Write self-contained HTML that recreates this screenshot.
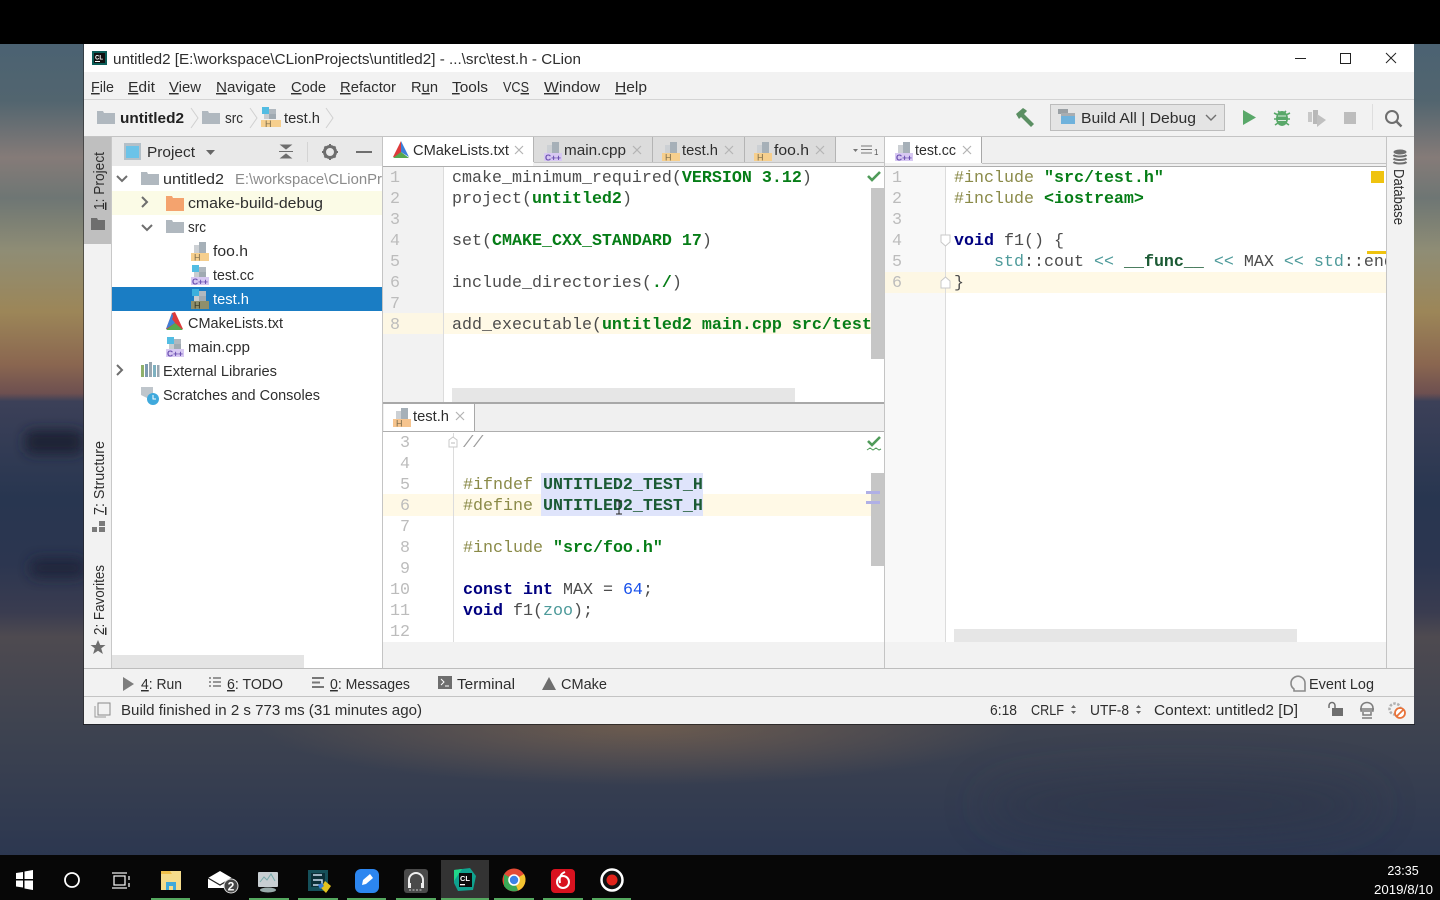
<!DOCTYPE html>
<html><head><meta charset="utf-8"><title>CLion</title>
<style>
html,body{margin:0;padding:0;width:1440px;height:900px;overflow:hidden;background:#000}
svg{display:block}
.u{font-family:"Liberation Sans",sans-serif;font-size:14.5px;fill:#2e2e2e}
.m{font-family:"Liberation Mono",monospace;font-size:16.67px;fill:#4c4c4c;white-space:pre}
.n{font-family:"Liberation Mono",monospace;font-size:16.67px;fill:#bcbcbc}
.g{fill:#067d17;font-weight:bold}
.k{fill:#000080;font-weight:bold}
.p{fill:#8a8a48}
.s{fill:#1b5a34;font-weight:bold}
.x{stroke:#b4b4b4;stroke-width:1.2;fill:none}
.hl{font-family:"Liberation Sans",sans-serif;font-size:9px;fill:#7a6a4a}
.cl{font-family:"Liberation Sans",sans-serif;font-size:8.5px;font-weight:bold;fill:#6a4fb0}
</style></head><body>
<svg width="1440" height="900" viewBox="0 0 1440 900" xmlns="http://www.w3.org/2000/svg">
<defs>
<linearGradient id="sky" x1="0" y1="44" x2="0" y2="856" gradientUnits="userSpaceOnUse">
<stop offset="0" stop-color="#4b6272"/><stop offset=".07" stop-color="#52656f"/><stop offset=".14" stop-color="#857b78"/><stop offset=".19" stop-color="#6e7674"/><stop offset=".255" stop-color="#8f8d75"/><stop offset=".33" stop-color="#9c8658"/><stop offset=".395" stop-color="#8a6650"/><stop offset=".43" stop-color="#6e5050"/><stop offset=".44" stop-color="#3c4058"/><stop offset=".56" stop-color="#283650"/><stop offset=".64" stop-color="#2c3650"/><stop offset=".70" stop-color="#3a3c50"/><stop offset=".73" stop-color="#4e4a50"/><stop offset=".84" stop-color="#3e4350"/><stop offset="1" stop-color="#2c3750"/>
</linearGradient>
<radialGradient id="glow" cx="640" cy="725" r="380" gradientUnits="userSpaceOnUse" gradientTransform="matrix(1 0 0 .16 0 609)">
<stop offset="0" stop-color="#75604f" stop-opacity=".85"/><stop offset="1" stop-color="#75604f" stop-opacity="0"/>
</radialGradient>
<filter id="bl" x="-50%" y="-100%" width="200%" height="300%"><feGaussianBlur stdDeviation="6"/></filter>
<filter id="bl2" x="-50%" y="-100%" width="200%" height="300%"><feGaussianBlur stdDeviation="22"/></filter>
<clipPath id="c1"><rect x="383" y="167" width="488" height="235"/></clipPath>
<clipPath id="c2"><rect x="383" y="433" width="488" height="209"/></clipPath>
<clipPath id="c3"><rect x="885" y="167" width="501" height="475"/></clipPath>
<g id="bh"><rect x="1" y="0" width="7" height="7" fill="#40b6e0" opacity=".9"/><rect x="8" y="2" width="7" height="5" fill="#b0b8bf"/><rect x="8" y="7" width="7" height="5" fill="#a0aab2"/><rect x="3" y="7" width="5" height="5" fill="#c8ccd0"/></g>
<g id="gh"><rect x="3" y="4" width="5" height="8" fill="#ccd0d4"/><rect x="8" y="1" width="7" height="11" fill="#a6b0b8"/></g>
<path id="fold" d="M0 1h6l1 2h11v11H0z" fill="#b0b8bf"/>
</defs>

<!-- desktop -->
<rect x="0" y="0" width="1440" height="44" fill="#000"/>
<rect x="0" y="44" width="1440" height="812" fill="url(#sky)"/>
<rect x="0" y="724" width="1440" height="132" fill="url(#glow)"/>
<ellipse cx="1180" cy="805" rx="200" ry="28" fill="#2a3044" opacity=".45" filter="url(#bl2)"/>
<rect x="25" y="430" width="58" height="24" rx="8" fill="#1f2236" filter="url(#bl)"/>
<rect x="30" y="558" width="55" height="20" rx="8" fill="#1a2238" opacity=".8" filter="url(#bl)"/>
<rect x="83" y="44" width="1" height="681" fill="#222" opacity=".55"/>
<rect x="83" y="724" width="1332" height="1" fill="#111" opacity=".6"/>

<!-- window -->
<rect x="84" y="44" width="1330" height="680" fill="#f2f2f2"/>
<rect x="84" y="44" width="1330" height="28" fill="#fff"/>
<rect x="92" y="51" width="15" height="14" fill="#0b5d58"/><rect x="94" y="53" width="11" height="10" fill="#111"/>
<text x="95" y="59.5" font-family="Liberation Sans" font-size="6" font-weight="bold" fill="#fff">CL</text>
<rect x="95" y="61" width="5" height="1" fill="#fff"/>
<text class="u" x="113" y="64" textLength="468" lengthAdjust="spacingAndGlyphs">untitled2 [E:\workspace\CLionProjects\untitled2] - ...\src\test.h - CLion</text>
<path d="M1295 58.5h11" stroke="#222" stroke-width="1"/>
<rect x="1340.500" y="53.500" width="10" height="10" fill="none" stroke="#222"/>
<path d="M1386 53l10 10M1396 53l-10 10" stroke="#222" stroke-width="1"/>

<!-- menu -->
<g>
<text class="u" x="91" y="92" textLength="23" lengthAdjust="spacingAndGlyphs"><tspan text-decoration="underline">F</tspan>ile</text>
<text class="u" x="128" y="92" textLength="27" lengthAdjust="spacingAndGlyphs"><tspan text-decoration="underline">E</tspan>dit</text>
<text class="u" x="169" y="92" textLength="32" lengthAdjust="spacingAndGlyphs"><tspan text-decoration="underline">V</tspan>iew</text>
<text class="u" x="216" y="92" textLength="60" lengthAdjust="spacingAndGlyphs"><tspan text-decoration="underline">N</tspan>avigate</text>
<text class="u" x="291" y="92" textLength="35" lengthAdjust="spacingAndGlyphs"><tspan text-decoration="underline">C</tspan>ode</text>
<text class="u" x="340" y="92" textLength="56" lengthAdjust="spacingAndGlyphs"><tspan text-decoration="underline">R</tspan>efactor</text>
<text class="u" x="411" y="92" textLength="27" lengthAdjust="spacingAndGlyphs">R<tspan text-decoration="underline">u</tspan>n</text>
<text class="u" x="452" y="92" textLength="36" lengthAdjust="spacingAndGlyphs"><tspan text-decoration="underline">T</tspan>ools</text>
<text class="u" x="503" y="92" textLength="26" lengthAdjust="spacingAndGlyphs">VC<tspan text-decoration="underline">S</tspan></text>
<text class="u" x="544" y="92" textLength="56" lengthAdjust="spacingAndGlyphs"><tspan text-decoration="underline">W</tspan>indow</text>
<text class="u" x="615" y="92" textLength="32" lengthAdjust="spacingAndGlyphs"><tspan text-decoration="underline">H</tspan>elp</text>
</g>
<rect x="84" y="99" width="1330" height="1" fill="#d4d4d4"/>

<!-- nav bar -->
<use href="#fold" transform="translate(97,110)"/>
<text class="u" x="120" y="123" textLength="64" lengthAdjust="spacingAndGlyphs" style="font-weight:bold;fill:#222">untitled2</text>
<path d="M191 108l7 10-7 10" fill="none" stroke="#d0d0d0"/>
<use href="#fold" transform="translate(202,110)"/>
<text class="u" x="225" y="123" textLength="18" lengthAdjust="spacingAndGlyphs">src</text>
<path d="M250 108l7 10-7 10" fill="none" stroke="#d0d0d0"/>
<g transform="translate(261,107)"><use href="#bh"/><rect y="13" width="20" height="7" fill="#f6cf8e"/><text class="hl" x="4" y="20">H</text></g>
<text class="u" x="284" y="123" textLength="36" lengthAdjust="spacingAndGlyphs">test.h</text>
<path d="M326 108l7 10-7 10" fill="none" stroke="#d0d0d0"/>
<!-- toolbar right -->
<path d="M1016 114l7-6 3 2 1 1-3 3 10 10-3 3-10-10-2 2z" fill="#5b8f63"/>
<rect x="1050.500" y="104.500" width="174" height="26" fill="#e4e4e4" stroke="#bcbcbc"/>
<rect x="1058" y="109" width="10" height="5" fill="#9aa0a4"/><rect x="1061" y="113" width="14" height="11" fill="#6fb2dc"/><rect x="1061" y="113" width="14" height="3" fill="#a8adb1"/>
<text class="u" x="1081" y="123" textLength="115" lengthAdjust="spacingAndGlyphs">Build All | Debug</text>
<path d="M1206 115l5 5 5-5" fill="none" stroke="#707070" stroke-width="1.4"/>
<path d="M1243 110l13 7.500-13 7.500z" fill="#59a869"/>
<ellipse cx="1282" cy="118.500" rx="6" ry="7.500" fill="#59a869"/><path d="M1274 113l4 2M1290 113l-4 2M1274 119h3M1290 119h-3M1275 125l3-2M1289 125l-3-2M1278 111l2 2M1286 111l-2 2" stroke="#59a869" stroke-width="1.6"/><path d="M1278 116h8M1278 120.500h8" stroke="#dcebdf" stroke-width="1"/>
<rect x="1308" y="112" width="4" height="10" fill="#c8c8c8"/><rect x="1313" y="110" width="5" height="14" fill="#b8b8b8"/><path d="M1317 114l9 6-9 7z" fill="#c0c0c0"/>
<rect x="1344" y="112" width="12" height="12" fill="#bdbdbd"/>
<rect x="1372" y="104" width="1" height="26" fill="#dedede"/>
<circle cx="1392" cy="117" r="6" fill="none" stroke="#6e6e6e" stroke-width="2"/><path d="M1396.500 121.500l5 5" stroke="#6e6e6e" stroke-width="2.4"/>
<rect x="84" y="136" width="1330" height="1" fill="#c4c4c4"/>

<!-- left stripe -->
<rect x="84" y="137" width="28" height="531" fill="#f2f2f2"/>
<rect x="84" y="137" width="27" height="107" fill="#bfbfbf"/>
<rect x="111" y="137" width="1" height="531" fill="#c8c8c8"/>
<g class="u">
<text class="u" transform="translate(104,210) rotate(-90)" textLength="58" lengthAdjust="spacingAndGlyphs"><tspan text-decoration="underline">1</tspan>: Project</text>
<text class="u" transform="translate(104,515) rotate(-90)" textLength="74" lengthAdjust="spacingAndGlyphs"><tspan text-decoration="underline">7</tspan>: Structure</text>
<text class="u" transform="translate(104,635) rotate(-90)" textLength="70" lengthAdjust="spacingAndGlyphs"><tspan text-decoration="underline">2</tspan>: Favorites</text>
</g>
<path d="M91 218h6l1 2h7v10H91z" fill="#6e6e6e"/>
<rect x="92" y="527" width="5" height="5" fill="#7a7a7a"/><rect x="99" y="527" width="6" height="5" fill="#7a7a7a"/><rect x="99" y="521" width="6" height="5" fill="#7a7a7a"/>
<path d="M98 640l2.200 5h5.300l-4.300 3.400 1.700 5.600-4.900-3.200-4.900 3.200 1.700-5.600-4.300-3.400h5.300z" fill="#6e6e6e"/>

<!-- project panel -->
<rect x="112" y="137" width="270" height="531" fill="#fff"/>
<rect x="112" y="137" width="270" height="29" fill="#e9e9e9"/>
<rect x="124" y="143" width="17" height="17" fill="#b4c0c8"/><rect x="126" y="146" width="13" height="12" fill="#6cc3e8"/>
<text class="u" x="147" y="157" textLength="48" lengthAdjust="spacingAndGlyphs">Project</text>
<path d="M206 150h9l-4.500 5z" fill="#666"/>
<path d="M279 151.500h14M281 145h10l-5 4zM281 158h10l-5-4z" fill="#6e6e6e" stroke="#6e6e6e" stroke-width="1"/>
<rect x="307" y="142" width="1" height="20" fill="#d4d4d4"/>
<circle cx="330" cy="152" r="5.500" fill="none" stroke="#6e6e6e" stroke-width="3"/><path d="M330 144v3M330 157v3M322 152h3M335 152h3M324.500 146.500l2 2M333.500 155.500l2 2M335.500 146.500l-2 2M326.500 155.500l-2 2" stroke="#6e6e6e" stroke-width="2"/>
<rect x="356" y="151" width="16" height="2" fill="#6e6e6e"/>
<rect x="112" y="191" width="270" height="24" fill="#fbfbe6"/>
<rect x="112" y="287" width="270" height="24" fill="#1a7dc4"/>
<!-- tree -->
<path d="M117 176l5 5 5-5M142 197l5 5-5 5M142 225l5 5 5-5M117 365l5 5-5 5" fill="none" stroke="#6e6e6e" stroke-width="2"/>
<use href="#fold" transform="translate(141,171)"/>
<text class="u" x="163" y="184" textLength="61" lengthAdjust="spacingAndGlyphs">untitled2</text>
<text class="u" x="235" y="184" textLength="147" lengthAdjust="spacingAndGlyphs" style="fill:#8c8c8c">E:\workspace\CLionPr</text>
<path d="M166 196h6l1 2h11v13h-18z" fill="#f4a36e"/>
<text class="u" x="188" y="208" textLength="135" lengthAdjust="spacingAndGlyphs">cmake-build-debug</text>
<use href="#fold" transform="translate(166,219)"/>
<text class="u" x="188" y="232" textLength="18" lengthAdjust="spacingAndGlyphs">src</text>
<g transform="translate(191,241)"><use href="#gh"/><rect y="12" width="18" height="8" fill="#f6cf8e"/><text class="hl" x="3" y="19.500">H</text></g>
<text class="u" x="213" y="256" textLength="35" lengthAdjust="spacingAndGlyphs">foo.h</text>
<g transform="translate(191,265)"><use href="#bh"/><rect y="12" width="18" height="8" fill="#d7c8f2"/><text class="cl" x="1" y="19.500" textLength="16" lengthAdjust="spacingAndGlyphs">C++</text></g>
<text class="u" x="213" y="280" textLength="41" lengthAdjust="spacingAndGlyphs">test.cc</text>
<g transform="translate(191,289)"><use href="#bh"/><rect y="12" width="18" height="8" fill="#8f8f6c"/><text class="hl" x="3" y="19.500" style="fill:#33321f">H</text></g>
<text class="u" x="213" y="304" textLength="36" lengthAdjust="spacingAndGlyphs" style="fill:#fff">test.h</text>
<path d="M166 329l6-16 3-1 8 17z" fill="#dd3b3b"/><path d="M172 313l-6 16 9-6z" fill="#3d7fd8"/><path d="M166 330l9-7 8 7z" fill="#55a84f"/><path d="M172 319l3-6 4 9-3 2z" fill="#dd3b3b"/>
<text class="u" x="188" y="328" textLength="95" lengthAdjust="spacingAndGlyphs">CMakeLists.txt</text>
<g transform="translate(166,337)"><use href="#bh"/><rect y="12" width="18" height="8" fill="#d7c8f2"/><text class="cl" x="1" y="19.500" textLength="16" lengthAdjust="spacingAndGlyphs">C++</text></g>
<text class="u" x="188" y="352" textLength="62" lengthAdjust="spacingAndGlyphs">main.cpp</text>
<g><rect x="141" y="365" width="3" height="12" fill="#8fb06a"/><rect x="145" y="364" width="3" height="13" fill="#7d9ab0"/><rect x="149" y="362" width="3" height="15" fill="#9aa7b0"/><rect x="153" y="365" width="3" height="12" fill="#7db0c0"/><rect x="157" y="365" width="2.500" height="12" fill="#9aa7b0"/></g>
<text class="u" x="163" y="376" textLength="114" lengthAdjust="spacingAndGlyphs">External Libraries</text>
<path d="M141 387h12v8l-6 3-6-3z" fill="#bfc6cc"/><circle cx="153" cy="399" r="6" fill="#3fa9dc"/><path d="M153 395v4h3" stroke="#fff" fill="none"/>
<text class="u" x="163" y="400" textLength="157" lengthAdjust="spacingAndGlyphs">Scratches and Consoles</text>
<rect x="112" y="655" width="192" height="13" fill="#e4e4e4"/>
<rect x="382" y="137" width="1" height="531" fill="#c4c4c4"/>

<!-- upper editor -->
<rect x="383" y="137" width="501" height="29" fill="#f0f0f0"/>
<rect x="383" y="137" width="150" height="29" fill="#fff"/>
<rect x="534" y="137" width="118" height="25" fill="#dcdcdc"/>
<rect x="653" y="137" width="91" height="25" fill="#dcdcdc"/>
<rect x="745" y="137" width="90" height="25" fill="#dcdcdc"/>
<path d="M533.500 137v25M652.500 137v25M744.500 137v25M835.500 137v25" stroke="#b4b4b4"/>
<rect x="534" y="162" width="350" height="1" fill="#c4c4c4"/>
<rect x="383" y="166" width="501" height="1" fill="#aeaeae"/>
<path d="M401 141l-8 16h8z" fill="#dd3b3b"/><path d="M401 141l8 16-8-5z" fill="#3d7fd8"/><path d="M393 158l8-6 8 6z" fill="#55a84f"/>
<text class="u" x="413" y="155" textLength="96" lengthAdjust="spacingAndGlyphs">CMakeLists.txt</text>
<path class="x" d="M515 146l8 8M523 146l-8 8"/>
<g transform="translate(544,141)"><use href="#gh"/><rect y="12" width="18" height="8" fill="#d7c8f2"/><text class="cl" x="1" y="19.500" textLength="16" lengthAdjust="spacingAndGlyphs">C++</text></g>
<text class="u" x="564" y="155" textLength="62" lengthAdjust="spacingAndGlyphs">main.cpp</text>
<path class="x" d="M633 146l8 8M641 146l-8 8"/>
<g transform="translate(662,141)"><use href="#gh"/><rect y="12" width="18" height="8" fill="#f6cf8e"/><text class="hl" x="3" y="19.500">H</text></g>
<text class="u" x="682" y="155" textLength="36" lengthAdjust="spacingAndGlyphs">test.h</text>
<path class="x" d="M725 146l8 8M733 146l-8 8"/>
<g transform="translate(754,141)"><use href="#gh"/><rect y="12" width="18" height="8" fill="#f6cf8e"/><text class="hl" x="3" y="19.500">H</text></g>
<text class="u" x="774" y="155" textLength="35" lengthAdjust="spacingAndGlyphs">foo.h</text>
<path class="x" d="M816 146l8 8M824 146l-8 8"/>
<path d="M853 149h5l-2.500 3z" fill="#777"/><path d="M861 146h11M861 149.500h11M861 153h11" stroke="#777"/><text x="874" y="155" font-family="Liberation Sans" font-size="8" fill="#555">1</text>

<rect x="383" y="167" width="501" height="235" fill="#fff"/>
<rect x="383" y="167" width="60" height="235" fill="#f2f2f2"/>
<rect x="443" y="167" width="1" height="235" fill="#dcdcdc"/>
<rect x="383" y="313" width="60" height="21" fill="#fdf7e4"/>
<rect x="444" y="313" width="428" height="21" fill="#fff9e6"/>
<g clip-path="url(#c1)">
<text class="n" x="390" y="182">1</text><text class="n" x="390" y="203">2</text><text class="n" x="390" y="224">3</text><text class="n" x="390" y="245">4</text><text class="n" x="390" y="266">5</text><text class="n" x="390" y="287">6</text><text class="n" x="390" y="308">7</text><text class="n" x="390" y="329">8</text>
<text class="m" x="452" y="182">cmake_minimum_required(<tspan class="g">VERSION 3.12</tspan>)</text>
<text class="m" x="452" y="203">project(<tspan class="g">untitled2</tspan>)</text>
<text class="m" x="452" y="245">set(<tspan class="g">CMAKE_CXX_STANDARD 17</tspan>)</text>
<text class="m" x="452" y="287">include_directories(<tspan class="g">./</tspan>)</text>
<text class="m" x="452" y="329">add_executable(<tspan class="g">untitled2 main.cpp src/test.cc</tspan>)</text>
</g>
<rect x="871" y="188" width="13" height="171" fill="#c6c6c6"/>
<rect x="452" y="388" width="343" height="14" fill="#e6e6e6"/>
<path d="M868 176l4 4 8-8" fill="none" stroke="#4f9b59" stroke-width="2.600"/>

<rect x="383" y="402" width="501" height="2" fill="#a8a8a8"/>
<!-- lower editor -->
<rect x="383" y="404" width="501" height="28" fill="#f0f0f0"/>
<rect x="384" y="404" width="90" height="27" fill="#fff"/>
<path d="M474.500 404v27" stroke="#a8a8a8"/>
<rect x="383" y="431" width="501" height="1" fill="#aeaeae"/>
<g transform="translate(393,407)"><use href="#gh"/><rect y="12" width="18" height="8" fill="#f6c48e"/><text class="hl" x="3" y="19.500">H</text></g>
<text class="u" x="413" y="421" textLength="36" lengthAdjust="spacingAndGlyphs">test.h</text>
<path class="x" d="M456 412l8 8M464 412l-8 8"/>
<rect x="383" y="432" width="501" height="210" fill="#fff"/>
<rect x="383" y="494" width="489" height="22" fill="#fff9e6"/>
<rect x="453" y="433" width="1" height="209" fill="#dcdcdc"/>
<rect x="541" y="473" width="162" height="43" fill="#dfe4fb"/>
<g clip-path="url(#c2)">
<text class="n" x="400" y="447">3</text><text class="n" x="400" y="468">4</text><text class="n" x="400" y="489">5</text><text class="n" x="400" y="510">6</text><text class="n" x="400" y="531">7</text><text class="n" x="400" y="552">8</text><text class="n" x="400" y="573">9</text><text class="n" x="390" y="594">10</text><text class="n" x="390" y="615">11</text><text class="n" x="390" y="636">12</text>
<text class="m" x="463" y="447" style="fill:#9c9c9c;font-style:italic">//</text>
<text class="m" x="463" y="489"><tspan class="p">#ifndef</tspan> <tspan class="s">UNTITLED2_TEST_H</tspan></text>
<text class="m" x="463" y="510"><tspan class="p">#define</tspan> <tspan class="s">UNTITLED2_TEST_H</tspan></text>
<text class="m" x="463" y="552"><tspan class="p">#include</tspan> <tspan class="g">"src/foo.h"</tspan></text>
<text class="m" x="463" y="594"><tspan class="k">const int</tspan> MAX = <tspan fill="#1750eb">64</tspan>;</text>
<text class="m" x="463" y="615"><tspan class="k">void</tspan> f1(<tspan fill="#4d9a9a">zoo</tspan>);</text>
</g>
<path d="M449 447v-7l4-3 4 3v7z" fill="#fff" stroke="#c8c8c8"/><path d="M451 443h4" stroke="#bbb"/>
<path d="M616 501h3v13h-3M622 501h-3v13h3" fill="none" stroke="#222"/>
<rect x="871" y="473" width="13" height="93" fill="#c6c6c6"/>
<rect x="866" y="491" width="14" height="3" fill="#b0b0e6"/><rect x="866" y="501" width="14" height="3" fill="#b0b0e6"/>
<path d="M868 441l4 4 8-8" fill="none" stroke="#4f9b59" stroke-width="2.600"/><path d="M867 450l3-2 3 2 3-2 3 2 2-1" fill="none" stroke="#4f9b59"/>
<rect x="383" y="642" width="501" height="26" fill="#f2f2f2"/>
<rect x="884" y="137" width="1" height="531" fill="#c4c4c4"/>

<!-- right editor -->
<rect x="885" y="137" width="501" height="29" fill="#f0f0f0"/>
<rect x="885" y="137" width="96" height="26" fill="#fff"/>
<path d="M981.500 137v26" stroke="#a8a8a8"/>
<rect x="982" y="163" width="404" height="1" fill="#c4c4c4"/>
<rect x="885" y="166" width="501" height="1" fill="#aeaeae"/>
<g transform="translate(895,141)"><use href="#gh"/><rect y="12" width="18" height="8" fill="#d7c8f2"/><text class="cl" x="1" y="19.500" textLength="16" lengthAdjust="spacingAndGlyphs">C++</text></g>
<text class="u" x="915" y="155" textLength="41" lengthAdjust="spacingAndGlyphs">test.cc</text>
<path class="x" d="M963 146l8 8M971 146l-8 8"/>
<rect x="885" y="167" width="501" height="475" fill="#fff"/>
<rect x="885" y="167" width="60" height="475" fill="#f8f8f8"/>
<rect x="945" y="167" width="1" height="475" fill="#dcdcdc"/>
<rect x="885" y="272" width="60" height="21" fill="#fdf7e4"/>
<rect x="946" y="272" width="440" height="21" fill="#fff9e6"/>
<g clip-path="url(#c3)">
<text class="n" x="892" y="182">1</text><text class="n" x="892" y="203">2</text><text class="n" x="892" y="224">3</text><text class="n" x="892" y="245">4</text><text class="n" x="892" y="266">5</text><text class="n" x="892" y="287">6</text>
<text class="m" x="954" y="182"><tspan class="p">#include</tspan> <tspan class="g">"src/test.h"</tspan></text>
<text class="m" x="954" y="203"><tspan class="p">#include</tspan> <tspan class="g">&lt;iostream&gt;</tspan></text>
<text class="m" x="954" y="245"><tspan class="k">void</tspan> f1() {</text>
<text class="m" x="954" y="266">    <tspan fill="#4d9a9a">std</tspan>::cout <tspan fill="#4d9a9a">&lt;&lt;</tspan> <tspan class="s">__func__</tspan> <tspan fill="#4d9a9a">&lt;&lt;</tspan> MAX <tspan fill="#4d9a9a">&lt;&lt;</tspan> <tspan fill="#4d9a9a">std</tspan>::endl;</text>
<text class="m" x="954" y="287">}</text>
</g>
<path d="M941 235h9v7l-4.500 4-4.500-4z" fill="#fff" stroke="#c8c8c8"/><path d="M941 288v-7l4.500-4 4.500 4v7z" fill="#fff" stroke="#c8c8c8"/>
<rect x="1371" y="171" width="13" height="12" fill="#efc30f"/>
<rect x="1367" y="251" width="19" height="3" fill="#efc30f"/>
<rect x="954" y="629" width="343" height="13" fill="#e6e6e6"/>
<rect x="885" y="642" width="501" height="26" fill="#f2f2f2"/>
<rect x="1386" y="137" width="1" height="531" fill="#c4c4c4"/>
<!-- right stripe -->
<rect x="1387" y="137" width="27" height="531" fill="#f2f2f2"/>
<ellipse cx="1400" cy="152" rx="6.500" ry="2.500" fill="#6e6e6e"/><path d="M1393.500 155c2 2 11 2 13 0M1393.500 158.500c2 2 11 2 13 0M1393.500 162c2 2 11 2 13 0" fill="none" stroke="#6e6e6e" stroke-width="2"/>
<text class="u" transform="translate(1394,169) rotate(90)" textLength="56" lengthAdjust="spacingAndGlyphs">Database</text>

<!-- bottom tool bar -->
<rect x="84" y="668" width="1330" height="1" fill="#bdbdbd"/>
<rect x="84" y="669" width="1330" height="28" fill="#f2f2f2"/>
<rect x="84" y="696" width="1330" height="1" fill="#c4c4c4"/>
<path d="M123 677l11 7-11 7z" fill="#7d7d7d"/>
<text class="u" x="141" y="689" textLength="41" lengthAdjust="spacingAndGlyphs"><tspan text-decoration="underline">4</tspan>: Run</text>
<path d="M209 678h2M213 678h8M209 682h2M213 682h8M209 686h2M213 686h8" stroke="#777" stroke-width="1.500"/>
<text class="u" x="227" y="689" textLength="56" lengthAdjust="spacingAndGlyphs"><tspan text-decoration="underline">6</tspan>: TODO</text>
<path d="M312 678h12M312 682.500h8M312 687h12" stroke="#777" stroke-width="2"/>
<text class="u" x="330" y="689" textLength="80" lengthAdjust="spacingAndGlyphs"><tspan text-decoration="underline">0</tspan>: Messages</text>
<rect x="438" y="676" width="14" height="13" fill="#6e6e6e"/><path d="M441 679l3 3-3 3M445 686h4" fill="none" stroke="#fff"/>
<text class="u" x="457" y="689" textLength="58" lengthAdjust="spacingAndGlyphs">Terminal</text>
<path d="M549 677l7 13h-14z" fill="#6e6e6e"/>
<text class="u" x="561" y="689" textLength="46" lengthAdjust="spacingAndGlyphs">CMake</text>
<path d="M1294 691h11v-8a7 7 0 1 0-11 6z" fill="none" stroke="#8a8a8a" stroke-width="1.600"/>
<text class="u" x="1309" y="689" textLength="65" lengthAdjust="spacingAndGlyphs">Event Log</text>

<!-- status -->
<rect x="84" y="697" width="1330" height="27" fill="#f2f2f2"/>
<rect x="98" y="703" width="12" height="12" fill="none" stroke="#8a8a8a"/><path d="M95 706v11h11" fill="none" stroke="#9a9a9a"/>
<text class="u" x="121" y="715" textLength="301" lengthAdjust="spacingAndGlyphs">Build finished in 2 s 773 ms (31 minutes ago)</text>
<text class="u" x="990" y="715" textLength="27" lengthAdjust="spacingAndGlyphs">6:18</text>
<text class="u" x="1031" y="715" textLength="33" lengthAdjust="spacingAndGlyphs">CRLF</text>
<path d="M1071 708l2.500-3 2.500 3zM1071 711l2.500 3 2.500-3z" fill="#666"/>
<text class="u" x="1090" y="715" textLength="39" lengthAdjust="spacingAndGlyphs">UTF-8</text>
<path d="M1136 708l2.500-3 2.500 3zM1136 711l2.500 3 2.500-3z" fill="#666"/>
<text class="u" x="1154" y="715" textLength="144" lengthAdjust="spacingAndGlyphs">Context: untitled2 [D]</text>
<rect x="1332" y="708" width="11" height="8" fill="#6e6e6e"/><path d="M1329 708v-2.500a3 3 0 0 1 6 0V708" fill="none" stroke="#6e6e6e" stroke-width="1.500"/>
<path d="M1361 708a6 5.500 0 0 1 12 0v3h-12z" fill="none" stroke="#7d7d7d" stroke-width="1.500"/><path d="M1360 709h14M1363 712v3h8v-3M1362 718h10" stroke="#7d7d7d" stroke-width="1.500" fill="none"/>
<circle cx="1395" cy="709" r="5.500" fill="none" stroke="#b0b0b0" stroke-width="2.500" stroke-dasharray="2.500 1.500"/>
<circle cx="1400" cy="713" r="5" fill="#fff" stroke="#e8733a" stroke-width="1.800"/><path d="M1396.500 716.500l7-7" stroke="#e8733a" stroke-width="1.800"/>

<!-- taskbar -->
<rect x="0" y="855" width="1440" height="45" fill="#070707"/>
<rect x="441" y="860" width="48" height="40" fill="#333"/>
<path d="M16 873l7-1v7h-7zM24.500 871.500l8.500-1.500v9h-8.500zM16 880.500h7v7l-7-1zM24.500 880.500H33V890l-8.500-1.500z" fill="#fff"/>
<circle cx="72" cy="880" r="7" fill="none" stroke="#fff" stroke-width="1.800"/>
<path d="M112 873h15M112 888h15M114 876h11v9h-11zM129 876v4M129 883v4" fill="none" stroke="#eee" stroke-width="1.300"/>
<rect x="161" y="871" width="20" height="19" fill="#f5dc8c"/><path d="M161 871h9l2 3h-11z" fill="#f0c14b"/><path d="M166 882h10v8h-3v-4h-4v4h-3z" fill="#3fa9dc"/>
<path d="M208 878l12-7 12 7v10h-24z" fill="#fff"/><path d="M208 878l12 7 12-7" fill="none" stroke="#222" stroke-width="1.300"/><circle cx="231" cy="886" r="7" fill="#444" stroke="#ddd" stroke-width="1"/><text x="231" y="890.500" font-family="Liberation Sans" font-size="12" font-weight="bold" fill="#fff" text-anchor="middle">2</text>
<rect x="258" y="872" width="20" height="15" rx="1" fill="#c8ced2"/><path d="M260 882l4-5 3 3 4-6 4 7" fill="none" stroke="#7aa"/><ellipse cx="268" cy="890" rx="8" ry="2.500" fill="#9aa"/>
<rect x="308" y="870" width="20" height="21" fill="#15505a"/><rect x="311" y="873" width="14" height="14" fill="#0c2f38"/><path d="M313 875h9M313 880h9v5h-9" fill="none" stroke="#cde" stroke-width="1.500"/><path d="M325 881l6 5-5 7-5-5z" fill="#e3c21e"/><path d="M318 885l4-2 2 3-4 3z" fill="#3a7fd5"/>
<rect x="355" y="869" width="24" height="24" rx="6" fill="#2c86f0"/><path d="M362 885l1-5 7-6 3 4-7 6z" fill="#fff"/>
<rect x="404" y="869" width="24" height="24" rx="3" fill="#4a4a4a"/><path d="M409 884v-4a7 7 0 0 1 14 0v4" fill="none" stroke="#eee" stroke-width="2"/><rect x="408" y="883" width="3" height="5" fill="#eee"/><rect x="421" y="883" width="3" height="5" fill="#eee"/><path d="M409 890h14" stroke="#ccc" stroke-dasharray="2 1.500"/>
<path d="M454 870l16-2 6 8-3 14-15 1-4-8z" fill="#0fa28f"/><path d="M454 870l8-1-8 12z" fill="#21d789"/><rect x="459" y="873" width="13" height="14" fill="#0b0b0b"/><text x="460" y="881" font-family="Liberation Sans" font-size="7.500" font-weight="bold" fill="#fff">CL</text><rect x="460" y="884" width="5" height="1.300" fill="#fff"/>
<circle cx="514" cy="880" r="11.500" fill="#e44a35"/><path d="M514 880l10-6a11.500 11.500 0 0 1-6 16.500z" fill="#f4c430"/><path d="M514 880l4 10.500a11.500 11.500 0 0 1-14-4.500l0-12z" fill="#3ca856"/><circle cx="514" cy="880" r="5" fill="#3d82e8" stroke="#fff" stroke-width="1.600"/>
<rect x="551" y="869" width="24" height="24" rx="4" fill="#d8121f"/><circle cx="563" cy="882" r="6" fill="none" stroke="#fff" stroke-width="2"/><path d="M565 872c-5 2-6 6-5 11" fill="none" stroke="#fff" stroke-width="2"/>
<circle cx="612" cy="880" r="10.500" fill="#111" stroke="#fff" stroke-width="2.500"/><circle cx="612" cy="880" r="5.500" fill="#e2231a"/>
<g fill="#55a85f"><rect x="151" y="898" width="39" height="2"/><rect x="249" y="898" width="40" height="2"/><rect x="298" y="898" width="40" height="2"/><rect x="347" y="898" width="39" height="2"/><rect x="396" y="898" width="40" height="2"/><rect x="441" y="898" width="48" height="2"/><rect x="494" y="898" width="40" height="2"/><rect x="543" y="898" width="40" height="2"/><rect x="592" y="898" width="39" height="2"/></g>
<text x="1403" y="875" font-family="Liberation Sans" font-size="12.500" fill="#fff" text-anchor="middle">23:35</text>
<text x="1374" y="894" font-family="Liberation Sans" font-size="12.500" fill="#fff" textLength="59" lengthAdjust="spacingAndGlyphs">2019/8/10</text>
</svg>
</body></html>
